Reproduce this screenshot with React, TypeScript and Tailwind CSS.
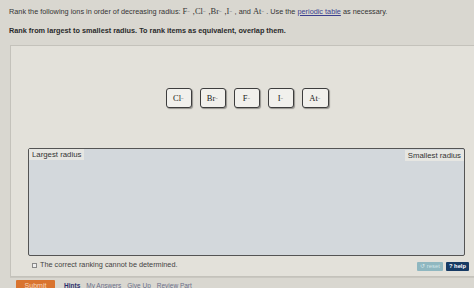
import React from 'react';

const ions = [
  { sym: 'Cl', w: 'w-[26px]' },
  { sym: 'Br', w: 'w-[26px]' },
  { sym: 'F', w: 'w-[26px]' },
  { sym: 'I', w: 'w-[26px]' },
  { sym: 'At', w: 'w-[27px]' },
];

function Ion({ sym }: { sym: string }) {
  return (
    <span className="font-['Liberation_Serif',serif]">
      {sym}
      <sup className="text-[5px] relative -top-[1px]">−</sup>
    </span>
  );
}

export default function App() {
  return (
    <div className="w-[474px] h-[288px] overflow-hidden bg-[#d9d7d0] font-['Liberation_Sans',Arial,sans-serif] text-[#333]">
      <div className="pl-[9px] pt-[6px] text-[7.3px] leading-[10px] text-[#353535] whitespace-nowrap">
        Rank the following ions in order of decreasing radius: <span className="text-[8.5px]"><Ion sym="F" /> ,<Ion sym="Cl" /> ,<Ion sym="Br" /> ,<Ion sym="I" /> </span>, and <span className="text-[8.5px]"><Ion sym="At" /></span> . Use the{' '}
        <span className="text-[#3b3f8f] underline">periodic table</span> as necessary.
      </div>
      <div className="pl-[9px] pt-[9px] text-[7.3px] font-bold text-[#2a2a2a] whitespace-nowrap">
        Rank from largest to smallest radius. To rank items as equivalent, overlap them.
      </div>

      <div className="ml-[10px] mt-[8px] w-[470px] h-[232px] border border-[#c4c2bb] bg-[#e3e1da] shadow-[0_1px_0_#c9c7c0]">
        <div className="flex justify-center gap-[8px] pt-[42px] pl-[4px]">
          {ions.map((i) => (
            <div
              key={i.sym}
              className={`${i.w} h-[20px] rounded-[3px] border-[1.5px] border-[#3d3d3d] bg-[#f1f0ec] shadow-[1px_1px_1px_rgba(0,0,0,0.35)] flex items-center justify-center text-[8.5px] text-[#222]`}
            >
              <Ion sym={i.sym} />
            </div>
          ))}
        </div>

        <div className="ml-[17px] mt-[40px] w-[437px] h-[108px] border-[1.5px] border-[#545454] rounded-[2px] bg-[#d3d8dc]">
          <div className="flex justify-between">
            <div className="bg-[#e6e6e2] text-[7.8px] text-[#333] px-[3px] h-[11px] leading-[11px]">Largest radius</div>
            <div className="bg-[#e6e6e2] text-[7.8px] text-[#333] px-[3px] h-[11px] leading-[11px] mt-[1px]">Smallest radius</div>
          </div>
        </div>

        <div className="flex items-center justify-between pl-[21px] pr-[10px] mt-[4px]">
          <div className="flex items-center gap-[3px] text-[7.3px] text-[#444]">
            <span className="w-[5px] h-[5px] border border-[#888] bg-[#eee]" />
            The correct ranking cannot be determined.
          </div>
          <div className="flex gap-[3px] mt-[2px]">
            <div className="w-[26px] h-[9px] rounded-[1px] bg-[#8fb7c0] text-[5.8px] text-[#d3e6e9] text-center leading-[9px]">↺ reset</div>
            <div className="w-[23px] h-[9px] rounded-[1px] bg-[#163a64] text-[5.8px] font-bold text-white text-center leading-[9px]">? help</div>
          </div>
        </div>
      </div>

      <div className="flex items-start gap-[9px] pl-[16px] mt-[3px]">
        <div className="w-[39px] h-[10px] bg-[#d9742f] rounded-[1px] text-[7px] text-[#f6d5bb] text-center leading-[11px]">Submit</div>
        <div className="flex gap-[6px] text-[6.5px] leading-[10px] text-[#6a6f8a] pt-[1px]">
          <span className="font-bold text-[#2b2f6b] underline">Hints</span>
          <span>My Answers</span>
          <span>Give Up</span>
          <span>Review Part</span>
        </div>
      </div>
    </div>
  );
}
